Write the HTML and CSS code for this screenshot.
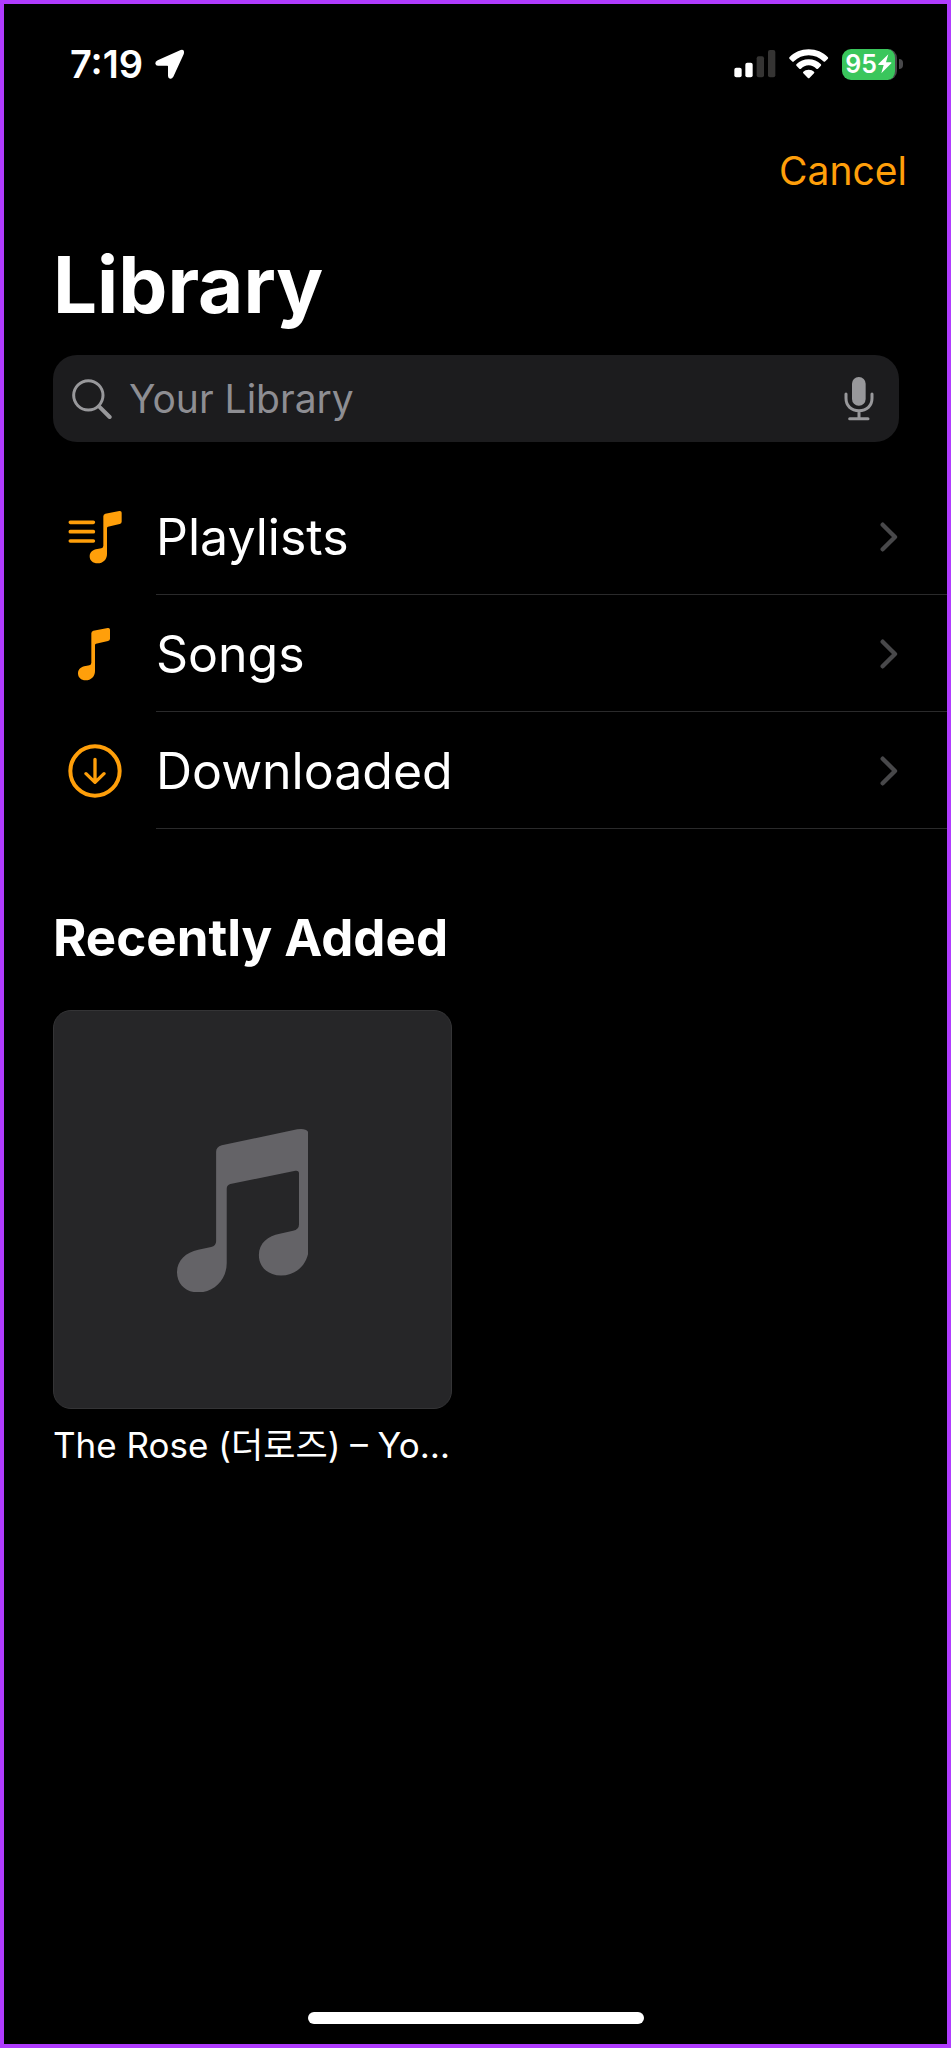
FILE: index.html
```html
<!DOCTYPE html>
<html lang="en">
<head>
<meta charset="utf-8">
<meta name="viewport" content="width=device-width, initial-scale=1">
<title>Library</title>
<link rel="stylesheet" href="styles.css">
</head>
<body>
<div class="app">
  <header class="status-bar">
    <div class="status-left">
      <span class="time">7:19</span>
      <svg class="location" viewBox="466 148 90 90" aria-hidden="true"><path fill="currentColor" d="M543 151Q554 148 553 160Q552 164 551 166L521 231Q517 238 511 237Q505 236 505 229V200Q505 198 503 198H475Q468 198 467 192Q466 186 474 182Z"/></svg>
    </div>
    <div class="status-right">
      <svg class="signal" viewBox="104 90 126 84" aria-hidden="true">
        <rect class="bar-on" x="105" y="143" width="22" height="29" rx="6"/>
        <rect class="bar-on" x="138" y="128" width="22" height="44" rx="6"/>
        <rect class="bar-off" x="172" y="109" width="22" height="63" rx="6"/>
        <rect class="bar-off" x="206" y="90" width="22" height="82" rx="6"/>
      </svg>
      <svg class="wifi" viewBox="268 85 120 90" aria-hidden="true"><path fill="currentColor" d="M327 86C350 86 370 95 384 109Q387 112 384 115L377 122Q374 125 371 122C359 111 344 104 327 104S295 111 283 122Q280 125 277 122L270 115Q267 112 270 109C284 95 304 86 327 86ZM327 116C341 116 354 121 363 130Q366 133 363 136L355 144Q353 146 350 144C344 138 336 134 327 134S310 138 304 144Q301 146 299 144L291 136Q288 133 291 130C300 121 313 116 327 116ZM327 147C334 147 339 149 343 153Q345 156 343 158L330 171Q327 174 324 171L311 158Q309 156 311 153C315 149 320 147 327 147Z"/></svg>
      <div class="battery">
        <div class="battery-body">
          <span class="battery-level">95</span>
          <svg class="bolt" viewBox="539 104 42 58" aria-hidden="true"><path fill="currentColor" d="M570 104L540 133Q538 136 542 136H556L549 161L579 131Q581 128 577 128H563Z"/></svg>
        </div>
        <span class="battery-tip"></span>
      </div>
    </div>
  </header>

  <nav class="toolbar"><button class="cancel" type="button">Cancel</button></nav>

  <main class="content">
    <h1 class="title">Library</h1>
    <form class="search" role="search">
      <svg class="search-icon" viewBox="124 442 120 120" fill="none" stroke="currentColor" aria-hidden="true"><circle cx="173" cy="491" r="44" stroke-width="9"/><path d="M205 524L237 556" stroke-width="12" stroke-linecap="round"/></svg>
      <input class="search-input" type="search" placeholder="Your Library" aria-label="Your Library">
      <button class="mic" type="button" aria-label="Dictate">
        <svg class="mic-icon" viewBox="190 110 90 132" aria-hidden="true"><rect x="214" y="110" width="41" height="86" rx="20" fill="currentColor"/><path fill="none" stroke="currentColor" stroke-width="9" stroke-linecap="round" d="M196 161V174C196 197 212 211 235 211S274 197 274 174V161M235 211V235M207 235H262"/></svg>
      </button>
    </form>

    <ul class="menu">
      <li class="menu-item"><a class="menu-link" href="#playlists">
        <svg class="menu-icon" viewBox="84 60 162 162" aria-hidden="true"><g fill="none" stroke="currentColor" stroke-width="11" stroke-linecap="round"><path d="M91 97H160M91 125H160M91 153H160"/></g><path fill="currentColor" d="M190 79Q190 73 196 71L238 63Q245 62 245 68V95Q245 101 239 102L204 110Q201 111 201 114V192C201 209 189 220 173 220C158 220 149 212 149 199C149 186 159 179 172 177L184 175Q190 174 190 167Z"/></svg>
        <span class="menu-label">Playlists</span>
        <svg class="chevron" viewBox="299 545 54 90" aria-hidden="true"><path d="M307 553L344 590L307 627"/></svg>
      </a></li>
      <li class="menu-item"><a class="menu-link" href="#songs">
        <svg class="menu-icon" viewBox="84 411 162 162" aria-hidden="true"><path fill="currentColor" d="M154 430Q154 424 160 422L203 414Q210 413 210 419V446Q210 452 204 453L168 461Q165 462 165 465V543C165 560 153 571 137 571C123 571 114 563 114 550C114 537 124 530 137 528L148 526Q154 525 154 518Z"/></svg>
        <span class="menu-label">Songs</span>
        <svg class="chevron" viewBox="299 545 54 90" aria-hidden="true"><path d="M307 553L344 590L307 627"/></svg>
      </a></li>
      <li class="menu-item"><a class="menu-link" href="#downloaded">
        <svg class="menu-icon" viewBox="84 760 162 162" fill="none" stroke="currentColor" stroke-linecap="round" stroke-linejoin="round" aria-hidden="true"><circle cx="165" cy="841" r="74" stroke-width="12"/><path stroke-width="10" d="M165 806V873M138 849L165 875L192 849"/></svg>
        <span class="menu-label">Downloaded</span>
        <svg class="chevron" viewBox="299 545 54 90" aria-hidden="true"><path d="M307 553L344 590L307 627"/></svg>
      </a></li>
    </ul>

    <section class="recent">
      <h2 class="recent-title">Recently Added</h2>
      <div class="albums">
        <a class="album" href="#album">
          <span class="cover"><svg class="cover-icon" viewBox="75 86 398 494" aria-hidden="true"><path fill="currentColor" d="M193 155Q193 140 210 135L438 87Q473 82 473 105V440C473 490 438 528 389 528C351 528 322 504 322 466C322 430 350 409 385 402L425 393Q443 389 443 374V220Q443 210 432 212L236 252Q225 255 225 266V490C225 541 187 579 139 579C103 579 75 555 75 518C75 482 102 458 139 450L178 442Q193 439 193 425Z"/></svg></span>
          <span class="album-name">The Rose (더로즈) – Yo…</span>
        </a>
      </div>
    </section>
  </main>

  <div class="home-indicator"></div>
</div>
</body>
</html>
```

FILE: styles.css
```css
* { box-sizing: border-box; }

body {
  margin: 0;
  background: #000;
  color: #fff;
  font-family: Inter, "Noto Sans CJK KR", sans-serif;
}

button { padding: 0; border: 0; background: none; font: inherit; }
a { color: inherit; text-decoration: none; }
svg { display: block; flex: none; }

.app {
  display: flex;
  flex-direction: column;
  min-height: 100vh;
  border: 4px solid #b03cff;
}

.status-bar {
  display: flex;
  justify-content: space-between;
  align-items: center;
  height: 80px;
  padding: 40px 44px 0 66px;
}
.status-left, .status-right { display: flex; align-items: center; }
.status-left { gap: 12px; }
.status-right { gap: 13px; }
.time { font-size: 38px; line-height: 40px; font-weight: 600; }
.location { width: 30px; height: 30px; }
.signal { width: 42px; height: 28px; }
.bar-on { fill: #fff; }
.bar-off { fill: #353433; }
.wifi { width: 40px; height: 30px; }
.battery { display: flex; align-items: center; gap: 2px; }
.battery-body {
  display: flex;
  align-items: center;
  justify-content: center;
  gap: 1px;
  width: 55px;
  height: 31px;
  border-radius: 9px;
  border-right: 2px solid #48484a;
  background: #3ac65c;
}
.battery-level { font-size: 25px; line-height: 31px; font-weight: 600; }
.bolt { width: 14px; height: 20px; }
.battery-tip { width: 4px; height: 10px; border-radius: 0 4px 4px 0; background: #48484a; }

.toolbar {
  display: flex;
  justify-content: flex-end;
  padding: 63px 40px 0;
}
.cancel { color: #ff9f0a; font-size: 39px; line-height: 48px; }

.content { padding-left: 49px; }

.title { margin: 42px 0 22px; font-size: 78px; line-height: 96px; font-weight: 700; }

.search {
  display: flex;
  align-items: center;
  height: 87px;
  margin-right: 48px;
  padding: 0 25px 0 19px;
  border-radius: 24px;
  background: #1c1c1e;
  color: #98989b;
}
.search-icon { width: 40px; height: 40px; }
.search-input {
  flex: 1;
  min-width: 0;
  height: 48px;
  margin: 0 17px;
  padding: 0;
  border: 0;
  outline: 0;
  background: none;
  color: #fff;
  font: 39px/48px Inter, sans-serif;
}
.search-input::placeholder { color: #8e8e93; opacity: 1; }
.mic { color: inherit; }
.mic-icon { width: 30px; height: 44px; }

.menu { margin: 36px 0 0; padding: 0; list-style: none; }
.menu-link {
  position: relative;
  display: flex;
  align-items: center;
  height: 117px;
  padding: 0 49px 0 15px;
}
.menu-link::after {
  content: "";
  position: absolute;
  right: 0;
  bottom: 0;
  left: 103px;
  height: 1px;
  background: #2a2a2b;
}
.menu-icon { width: 54px; height: 54px; margin-right: 34px; color: #ff9f0a; }
.menu-label { flex: 1; font-size: 50px; line-height: 64px; }
.chevron {
  width: 18px;
  height: 30px;
  fill: none;
  stroke: #48484a;
  stroke-width: 13px;
  stroke-linecap: round;
  stroke-linejoin: round;
}

.recent { padding: 77px 48px 0 0; }
.recent-title { margin: 0 0 40px; font-size: 51px; line-height: 64px; font-weight: 700; }
.albums { display: grid; grid-template-columns: 1fr 1fr; gap: 48px; }
.album { display: block; min-width: 0; }
.cover {
  display: flex;
  align-items: center;
  justify-content: center;
  aspect-ratio: 1;
  padding: 2px 20px 0 0;
  border: 1px solid #343436;
  border-radius: 18px;
  background: #262628;
  color: #646367;
}
.cover-icon { width: 35%; }
.album-name {
  display: block;
  margin-top: 12px;
  overflow: hidden;
  font-size: 35px;
  line-height: 48px;
  white-space: nowrap;
  text-overflow: ellipsis;
}

.home-indicator {
  width: 336px;
  height: 12px;
  margin: auto auto 20px;
  border-radius: 6px;
  background: #fff;
}
```
